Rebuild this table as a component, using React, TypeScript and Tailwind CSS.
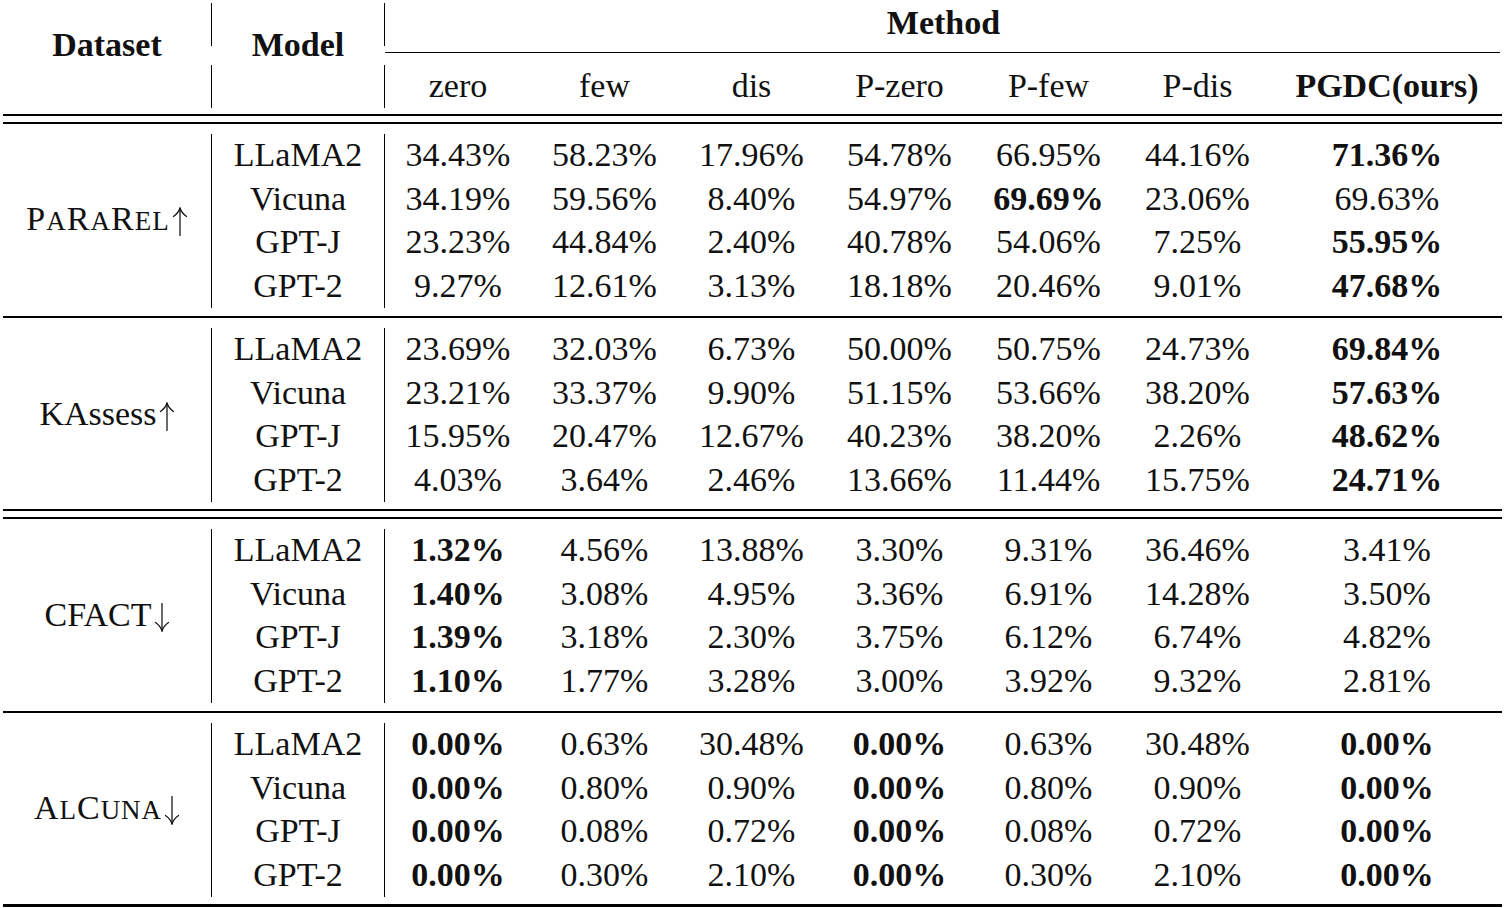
import React from "react";

type Group = { name: React.ReactNode; rows: { model: string; vals: string[] }[] };

function Arrow({ down = false }: { down?: boolean }) {
  return (
    <svg
      viewBox="0 0 16 29"
      className="inline-block w-[16px] h-[29px] align-[-6px] ml-[2px]"
      fill="none"
      stroke="#111"
      strokeWidth="1.25"
      strokeLinecap="round"
    >
      {down ? (
        <>
          <path d="M8 0.5 V27.5" />
          <path d="M1.5 19.5 C5 22 7 24.5 8 28 C9 24.5 11 22 14.5 19.5" />
        </>
      ) : (
        <>
          <path d="M8 1.5 V28.5" />
          <path d="M1.5 9.5 C5 7 7 4.5 8 1 C9 4.5 11 7 14.5 9.5" />
        </>
      )}
    </svg>
  );
}

const groups: Group[] = [
  {
    name: (
      <span className="tracking-[1px]">
        P<span className="text-[27px]">A</span>R<span className="text-[27px]">A</span>R
        <span className="text-[27px]">EL</span>
        <Arrow />
      </span>
    ),
    rows: [
      { model: "LLaMA2", vals: ["34.43", "58.23", "17.96", "54.78", "66.95", "44.16", "*71.36"] },
      { model: "Vicuna", vals: ["34.19", "59.56", "8.40", "54.97", "*69.69", "23.06", "69.63"] },
      { model: "GPT-J", vals: ["23.23", "44.84", "2.40", "40.78", "54.06", "7.25", "*55.95"] },
      { model: "GPT-2", vals: ["9.27", "12.61", "3.13", "18.18", "20.46", "9.01", "*47.68"] },
    ],
  },
  {
    name: (
      <span>
        KAssess
        <Arrow />
      </span>
    ),
    rows: [
      { model: "LLaMA2", vals: ["23.69", "32.03", "6.73", "50.00", "50.75", "24.73", "*69.84"] },
      { model: "Vicuna", vals: ["23.21", "33.37", "9.90", "51.15", "53.66", "38.20", "*57.63"] },
      { model: "GPT-J", vals: ["15.95", "20.47", "12.67", "40.23", "38.20", "2.26", "*48.62"] },
      { model: "GPT-2", vals: ["4.03", "3.64", "2.46", "13.66", "11.44", "15.75", "*24.71"] },
    ],
  },
  {
    name: (
      <span>
        CFACT
        <Arrow down />
      </span>
    ),
    rows: [
      { model: "LLaMA2", vals: ["*1.32", "4.56", "13.88", "3.30", "9.31", "36.46", "3.41"] },
      { model: "Vicuna", vals: ["*1.40", "3.08", "4.95", "3.36", "6.91", "14.28", "3.50"] },
      { model: "GPT-J", vals: ["*1.39", "3.18", "2.30", "3.75", "6.12", "6.74", "4.82"] },
      { model: "GPT-2", vals: ["*1.10", "1.77", "3.28", "3.00", "3.92", "9.32", "2.81"] },
    ],
  },
  {
    name: (
      <span className="tracking-[1px]">
        A<span className="text-[27px]">L</span>C<span className="text-[27px]">UNA</span>
        <Arrow down />
      </span>
    ),
    rows: [
      { model: "LLaMA2", vals: ["*0.00", "0.63", "30.48", "*0.00", "0.63", "30.48", "*0.00"] },
      { model: "Vicuna", vals: ["*0.00", "0.80", "0.90", "*0.00", "0.80", "0.90", "*0.00"] },
      { model: "GPT-J", vals: ["*0.00", "0.08", "0.72", "*0.00", "0.08", "0.72", "*0.00"] },
      { model: "GPT-2", vals: ["*0.00", "0.30", "2.10", "*0.00", "0.30", "2.10", "*0.00"] },
    ],
  },
];

const colW = ["w-[146px]", "w-[147px]", "w-[147px]", "w-[149px]", "w-[149px]", "w-[149px]", "flex-1"];
const headers = ["zero", "few", "dis", "P-zero", "P-few", "P-dis", "PGDC(ours)"];

function Rule({ h = "h-[2px]" }: { h?: string }) {
  return <div className={`${h} w-full bg-black`} />;
}

function Body({ g, pb }: { g: Group; pb: string }) {
  return (
    <div className={`flex pt-[10px] ${pb}`}>
      <div className="w-[208px] flex items-center justify-center pb-[3px] whitespace-nowrap">{g.name}</div>
      <div className="flex flex-col border-l border-black flex-1">
        {g.rows.map((r) => (
          <div key={r.model} className="flex h-[43.5px] items-center">
            <div className="w-[173px] h-full border-r border-black flex items-center justify-center pb-[2px]">
              {r.model}
            </div>
            {r.vals.map((v, i) => {
              const bold = v.startsWith("*");
              const t = bold ? v.slice(1) : v;
              return (
                <div
                  key={i}
                  className={`${colW[i]} h-full flex items-center justify-center pb-[2px] ${bold ? "font-bold" : ""}`}
                >
                  {t}%
                </div>
              );
            })}
          </div>
        ))}
      </div>
    </div>
  );
}

export default function App() {
  return (
    <div className="w-[1505px] h-[908px] bg-white overflow-hidden pl-[3px] font-['Liberation_Serif',serif] text-[34px] leading-[39px] text-[#111]">
      <div className="w-[1499px] flex flex-col">
        {/* header */}
        <div className="flex h-[108px] pt-[3px]">
          <div className="w-[208px] flex items-center justify-center pb-[22px] font-bold">Dataset</div>
          <div className="w-px flex flex-col">
            <div className="h-[43px] bg-black" />
            <div className="h-[19px]" />
            <div className="h-[43px] bg-black" />
          </div>
          <div className="w-[172px] flex items-center justify-center pb-[22px] font-bold">Model</div>
          <div className="w-px flex flex-col">
            <div className="h-[43px] bg-black" />
            <div className="h-[19px]" />
            <div className="h-[43px] bg-black" />
          </div>
          <div className="flex-1 flex flex-col">
            <div className="h-[43px] flex items-center justify-center pb-[5px] font-bold">Method</div>
            <div className="h-[19px] pt-[6px] pr-[2px]">
              <div className="h-px bg-black" />
            </div>
            <div className="h-[43px] flex">
              {headers.map((h, i) => (
                <div
                  key={h}
                  className={`${colW[i]} flex items-center justify-center pb-[3px] ${i === 6 ? "font-bold" : ""}`}
                >
                  {h}
                </div>
              ))}
            </div>
          </div>
        </div>
        <div className="mt-[6px]">
          <Rule />
        </div>
        <div className="mt-[6px]">
          <Rule />
        </div>
        <Body g={groups[0]} pb="pb-[8px]" />
        <Rule />
        <Body g={groups[1]} pb="pb-[7px]" />
        <Rule />
        <div className="mt-[6px]">
          <Rule />
        </div>
        <Body g={groups[2]} pb="pb-[8px]" />
        <Rule />
        <Body g={groups[3]} pb="pb-[7px]" />
        <Rule h="h-[3px]" />
      </div>
    </div>
  );
}
